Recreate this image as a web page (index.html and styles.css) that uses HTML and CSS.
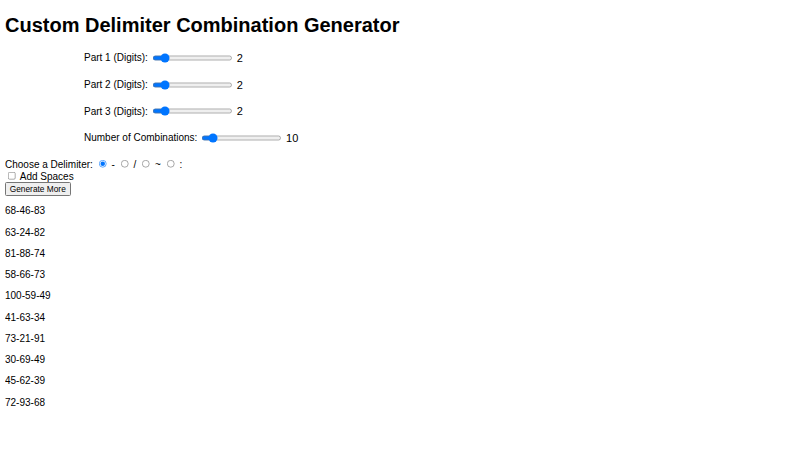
FILE: index.html
```html
<!DOCTYPE html>
<html lang="en">
<head>
<meta charset="utf-8">
<title>Custom Delimiter Combination Generator</title>
<link rel="stylesheet" href="styles.css">
</head>
<body>
<h1 class="title">Custom Delimiter Combination Generator</h1>

<div class="sliders">
  <div class="row">
    <label class="row-label" for="p1">Part 1 (Digits):</label>
    <input class="range" id="p1" type="range" min="1" max="10" value="2">
    <span class="row-value">2</span>
  </div>
  <div class="row">
    <label class="row-label" for="p2">Part 2 (Digits):</label>
    <input class="range" id="p2" type="range" min="1" max="10" value="2">
    <span class="row-value">2</span>
  </div>
  <div class="row">
    <label class="row-label" for="p3">Part 3 (Digits):</label>
    <input class="range" id="p3" type="range" min="1" max="10" value="2">
    <span class="row-value">2</span>
  </div>
  <div class="row">
    <label class="row-label" for="count">Number of Combinations:</label>
    <input class="range" id="count" type="range" min="1" max="100" value="10">
    <span class="row-value">10</span>
  </div>
</div>

<div class="delims">Choose a Delimiter: <label><input class="radio" type="radio" name="delim" value="-" checked> -</label> <label><input class="radio" type="radio" name="delim" value="/"> /</label> <label><input class="radio" type="radio" name="delim" value="~"> ~</label> <label><input class="radio" type="radio" name="delim" value=":"> :</label></div>
<div class="spaces"><label><input class="check" type="checkbox"> Add Spaces</label></div>
<button class="gen" type="button">Generate More</button>

<div class="results">
  <p class="combo">68-46-83</p>
  <p class="combo">63-24-82</p>
  <p class="combo">81-88-74</p>
  <p class="combo">58-66-73</p>
  <p class="combo">100-59-49</p>
  <p class="combo">41-63-34</p>
  <p class="combo">73-21-91</p>
  <p class="combo">30-69-49</p>
  <p class="combo">45-62-39</p>
  <p class="combo">72-93-68</p>
</div>
</body>
</html>
```
FILE: styles.css
```css
html {
  background: #fff;
}
body {
  margin: 5px;
  font-family: "Liberation Sans", Arial, sans-serif;
  font-size: 10px;
  color: #000;
}
.title {
  font-size: 20px;
  font-weight: bold;
  margin: 9.4px 0 13.4px;
}
.sliders {
  margin-left: 79px;
}
.row {
  display: flex;
  align-items: center;
  gap: 2.8px;
  height: 12px;
  margin: 14.6px 0;
}
.row-label {
  white-space: nowrap;
}
.range {
  zoom: 0.625;
  margin: 2px;
}
.row-value {
  font-size: 11px;
}
.delims,
.spaces {
  line-height: normal;
}
.radio,
.check {
  zoom: 0.625;
}
.gen {
  zoom: 0.625;
  font-family: "Liberation Sans", Arial, sans-serif;
  font-size: 13.333px;
}
.combo {
  line-height: 11.5px;
  margin: 9.75px 0;
}
```
